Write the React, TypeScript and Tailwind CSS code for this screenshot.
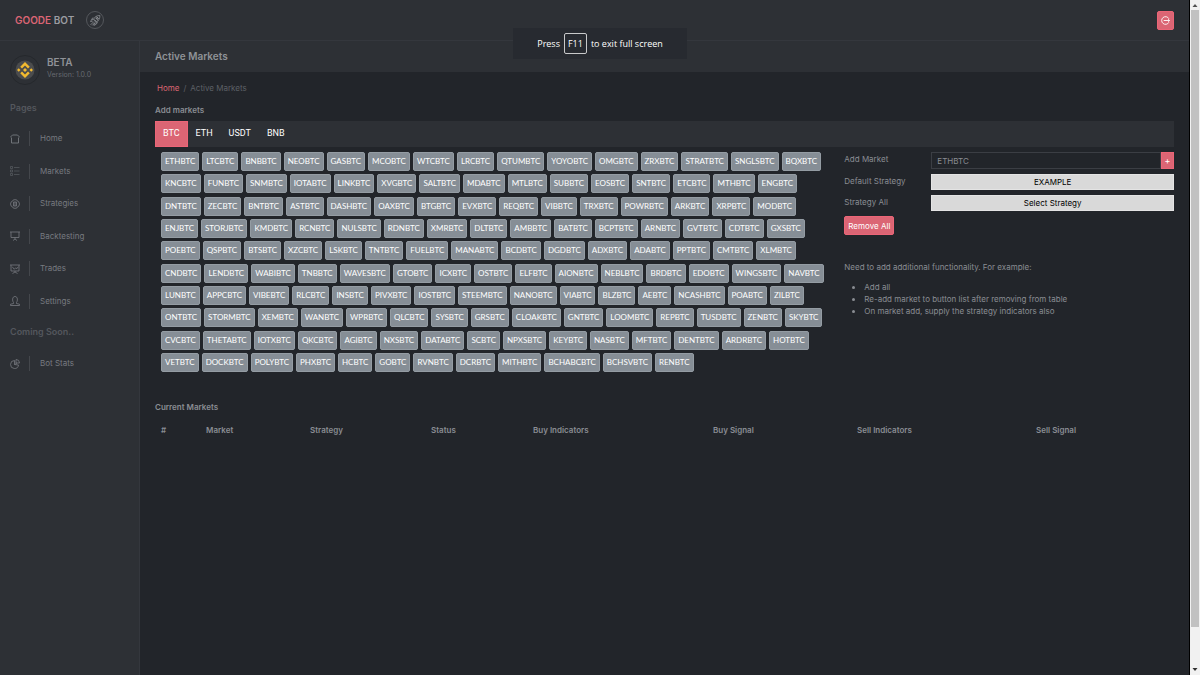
import type { ReactNode } from "react";

const TABS = ["BTC", "ETH", "USDT", "BNB"];

// base symbols, in the order the exchange lists them; all quoted in BTC
const MARKET_ROWS = [
  "ETH LTC BNB NEO GAS MCO WTC LRC QTUM YOYO OMG ZRX STRAT SNGLS BQX",
  "KNC FUN SNM IOTA LINK XVG SALT MDA MTL SUB EOS SNT ETC MTH ENG",
  "DNT ZEC BNT AST DASH OAX BTG EVX REQ VIB TRX POWR ARK XRP MOD",
  "ENJ STORJ KMD RCN NULS RDN XMR DLT AMB BAT BCPT ARN GVT CDT GXS",
  "POE QSP BTS XZC LSK TNT FUEL MANA BCD DGD ADX ADA PPT CMT XLM",
  "CND LEND WABI TNB WAVES GTO ICX OST ELF AION NEBL BRD EDO WINGS NAV",
  "LUN APPC VIBE RLC INS PIVX IOST STEEM NANO VIA BLZ AE NCASH POA ZIL",
  "ONT STORM XEM WAN WPR QLC SYS GRS CLOAK GNT LOOM REP TUSD ZEN SKY",
  "CVC THETA IOTX QKC AGI NXS DATA SC NPXS KEY NAS MFT DENT ARDR HOT",
  "VET DOCK POLY PHX HC GO RVN DCR MITH BCHABC BCHSV REN",
].map((row) => row.split(" ").map((s) => `${s}BTC`));

function Icon({ children }: { children: ReactNode }) {
  return (
    <svg
      viewBox="0 0 20 20"
      className="size-[10px] shrink-0"
      fill="none"
      stroke="currentColor"
      strokeWidth="1.6"
      aria-hidden="true"
    >
      {children}
    </svg>
  );
}

const NAV = [
  {
    label: "Home",
    icon: <path d="M3 7v11h14V7M0 7l5-5h10l5 5" strokeWidth="1.8" />,
  },
  {
    label: "Markets",
    icon: (
      <path
        d="M1 1h4v4H1zM1 8h4v4H1zM1 15h4v4H1zM8 3h11M8 10h11M8 17h11"
        strokeWidth="1.2"
        opacity="0.7"
      />
    ),
  },
  {
    label: "Strategies",
    icon: (
      <>
        <path d="M7 1.500h6l1.500 2.500 3 1.500L19 10l-1.500 4.500-3 1.500L13 18.500H7L5.500 16l-3-1.500L1 10l1.500-4.500 3-1.500z" />
        <path d="M7 6h6v8H7zM10 6v8" />
      </>
    ),
  },
  {
    label: "Backtesting",
    icon: <path d="M0 2h20M2 2v11h16V2M10 13v3M6 19l4-3 4 3" />,
  },
  {
    label: "Trades",
    icon: (
      <path d="M0 2h20M2 2v12h16V2M10 14v2M5 19l5-3 5 3M4.500 5.500l4 5 3-3 2 2 3-4" />
    ),
  },
  {
    label: "Settings",
    icon: (
      <path d="M7 13C4.500 10 4 1 10 1s5.500 9 3 12v2l6 1.500V19H1v-2.500L7 15z" />
    ),
  },
];

const COLUMNS = [
  { label: "#", width: "w-[45px]" },
  { label: "Market", width: "w-[104px]" },
  { label: "Strategy", width: "w-[121px]" },
  { label: "Status", width: "w-[102px]" },
  { label: "Buy Indicators", width: "w-[180px]" },
  { label: "Buy Signal", width: "w-[144px]" },
  { label: "Sell Indicators", width: "w-[179px]" },
  { label: "Sell Signal", width: "w-auto" },
];

function NavItem({ label, icon }: { label: string; icon: ReactNode }) {
  return (
    <li>
      <a href="#" className="flex h-[15px] items-center">
        <Icon>{icon}</Icon>
        <span className="ml-[9px] h-[15px] border-l border-[#44474c] pl-[10px] leading-[15px]">
          {label}
        </span>
      </a>
    </li>
  );
}

function TopBar() {
  return (
    <header className="flex h-[41px] shrink-0 items-center border-b border-[#34373d] bg-[#2d3035] pr-[15px] pl-[15px]">
      <a href="#" className="w-[60px] text-[10px] font-semibold whitespace-nowrap text-[#9a9ca1]">
        <span className="text-[#db6574]">GOODE</span> BOT
      </a>
      <button
        type="button"
        aria-label="Toggle sidebar"
        className="ml-[11px] grid size-[18px] place-items-center rounded-full border border-[#54575c] text-[#a0a3a8]"
      >
        <svg viewBox="0 0 20 20" className="size-[11px]" fill="none" stroke="currentColor" strokeWidth="1.2">
          <path d="M18 1c-6 0-9 2-12 7l5 5c5-3 7-6 7-12zM6 8 3 8 1 12l4-1M11 13l0 4-4 2 1-5M7 12l-6 6M9 14l-5 5M10 5l5 5M8 8l4 4M12 3l4 4M6 5l-3 2M14 12l-2 4" />
          <circle cx="13" cy="6" r="1.500" />
        </svg>
      </button>
      <button
        type="button"
        aria-label="Log out"
        className="ml-auto grid h-[19px] w-[17px] place-items-center rounded-xs border border-[#ec6577] bg-[#db6574] text-white"
      >
        <svg viewBox="0 0 20 20" className="size-[9px]" fill="none" stroke="currentColor" strokeWidth="2">
          <path d="M17.500 6a8.500 8.500 0 1 0 0 8M6 10h13M16 7l3 3-3 3" />
        </svg>
      </button>
    </header>
  );
}

function Sidebar() {
  return (
    <nav className="w-[140px] shrink-0 border-r border-[#34373d] bg-[#2d3035] px-[10px] text-[#777a80]">
      <div className="mt-[14px] flex h-[30px] items-start">
        <span className="grid size-[30px] shrink-0 place-items-center rounded-full border border-[#25282c]">
          <svg viewBox="0 0 40 40" className="size-[20px]">
            <circle cx="20" cy="20" r="19" fill="#4b4c4d" />
            <g fill="#f3ba2f">
              <path d="m20 4 9.500 9.500-3.500 3.500-6-6-6 6-3.500-3.500z" />
              <path d="m20 36 9.500-9.500-3.500-3.500-6 6-6-6-3.500 3.500z" />
              <path d="m4 20 3.500-3.500L11 20l-3.500 3.500zM29 20l3.500-3.500L36 20l-3.500 3.500zM16 20l4-4 4 4-4 4z" />
            </g>
          </svg>
        </span>
        <div className="ml-[7px]">
          <h1 className="text-[10px] leading-[14px] font-semibold text-[#8f9297]">BETA</h1>
          <p className="text-[7px] leading-[12px] text-[#666a70]">Version: 1.0.0</p>
        </div>
      </div>

      <h2 className="mt-[16px] text-[9px] leading-[14px] font-semibold text-[#54575d]">Pages</h2>
      <ul className="mt-[16px] flex h-[178px] flex-col justify-between">
        {NAV.map((n) => (
          <NavItem key={n.label} label={n.label} icon={n.icon} />
        ))}
      </ul>

      <h2 className="mt-[16px] text-[9px] leading-[14px] font-semibold text-[#54575d]">Coming Soon..</h2>
      <ul className="mt-[17px]">
        <NavItem
          label="Bot Stats"
          icon={<path d="M9 3a8 8 0 1 0 8 9l-8-1zM12 1v7h7a7 7 0 0 0-7-7zM9 11l5-3" />}
        />
      </ul>
    </nav>
  );
}

function MarketForm() {
  const select =
    "h-[16px] w-full appearance-none border border-[#e4e4e4] bg-[#d9d9d9] text-center text-[8px] leading-[14px] text-black [text-align-last:center]";
  return (
    <div className="pt-[5px] pl-[10px]">
      <form className="grid grid-cols-[87px_1fr] gap-y-[5px]">
        <label htmlFor="market" className="leading-[14px]">Add Market</label>
        <div className="flex h-[17px]">
          <input
            id="market"
            defaultValue="ETHBTC"
            className="min-w-0 flex-1 border border-[#3b3e44] bg-[#22252a] px-[5px] text-[8px] text-[#8a8d93]"
          />
          <button type="button" aria-label="Add" className="w-[13px] border border-[#ec6577] bg-[#db6574] text-[9px] leading-[15px] text-white">
            +
          </button>
        </div>
        <label htmlFor="strategy" className="leading-[14px]">Default Strategy</label>
        <select id="strategy" className={select}>
          <option>EXAMPLE</option>
        </select>
        <label htmlFor="strategy-all" className="leading-[14px]">Strategy All</label>
        <select id="strategy-all" className={select}>
          <option>Select Strategy</option>
        </select>
      </form>
      <button
        type="button"
        className="mt-[5px] block h-[19px] w-[50px] rounded-xs border border-[#ec6577] bg-[#db6574] text-[8px] whitespace-nowrap text-white"
      >
        Remove All
      </button>

      <p className="mt-[26px] leading-[12px]">Need to add additional functionality. For example:</p>
      <ul className="mt-[8px] list-disc pl-[20px] leading-[12px]">
        <li>Add all</li>
        <li>Re-add market to button list after removing from table</li>
        <li>On market add, supply the strategy indicators also</li>
      </ul>
    </div>
  );
}

function Scrollbar() {
  return (
    <div className="flex w-[11px] shrink-0 flex-col items-center border-l border-black bg-[#f1f1f1]" aria-hidden="true">
      <svg viewBox="0 0 10 10" className="size-[10px] text-[#505050]">
        <path d="M2.500 7 5 4l2.500 3z" fill="currentColor" />
      </svg>
      <div className="w-[8px] flex-1 bg-[#c1c1c1]" />
      <svg viewBox="0 0 10 10" className="mt-[38px] size-[10px] text-[#303030]">
        <path d="M2.500 3h5L5 6z" fill="currentColor" />
      </svg>
    </div>
  );
}

export default function App() {
  return (
    <div className="flex h-screen overflow-hidden bg-[#22252a] font-['Inter',sans-serif] text-[8px] text-[#8a8d93]">
      <div className="flex min-w-0 flex-1 flex-col">
        <TopBar />
        <div className="flex flex-1">
          <Sidebar />
          <main className="min-w-0 flex-1">
            <div className="flex h-[31px] items-center bg-[#2d3035] pl-[15px]">
              <h2 className="text-[10px] font-semibold text-[#8f9297]">Active Markets</h2>
            </div>
            <div className="px-[15px]">
              <nav aria-label="Breadcrumb" className="mt-[10px] flex gap-[4px] pl-[2px] leading-[12px] text-[#5d6066]">
                <a href="#" className="text-[#db6574]">Home</a>
                <span>/</span>
                <span>Active Markets</span>
              </nav>

              <h3 className="mt-[10px] leading-[12px] font-semibold">Add markets</h3>
              <div className="mt-[5px] flex h-[26px] bg-[#2d3035] font-['Roboto',sans-serif] text-[9px]">
                {TABS.map((t, i) => (
                  <button
                    key={t}
                    type="button"
                    className={
                      i === 0
                        ? "border border-[#ec6577] bg-[#db6574] px-[7px] text-white"
                        : "border border-transparent px-[7px] text-white"
                    }
                  >
                    {t}
                  </button>
                ))}
              </div>

              <div className="grid grid-cols-3">
                <div className="col-span-2 flex h-[225px] flex-col justify-between pt-[5px] pl-[6px]">
                  {MARKET_ROWS.map((row) => (
                    <div key={row[0]} className="flex gap-[3px]">
                      {row.map((m) => (
                        <button
                          key={m}
                          type="button"
                          className="h-[19px] rounded-xs border border-[#949ca3] bg-[#868e96] px-[3px] font-['Lato',sans-serif] text-[8px] leading-[17px] whitespace-nowrap text-white"
                        >
                          {m}
                        </button>
                      ))}
                    </div>
                  ))}
                </div>
                <MarketForm />
              </div>

              <h3 className="mt-[29px] leading-[12px] font-semibold">Current Markets</h3>
              <table className="mt-[10px] w-full table-fixed text-left">
                <thead>
                  <tr>
                    {COLUMNS.map((c) => (
                      <th key={c.label} scope="col" className={`${c.width} pl-[6px] leading-[14px] font-semibold`}>
                        {c.label}
                      </th>
                    ))}
                  </tr>
                </thead>
              </table>
            </div>
          </main>
        </div>
      </div>
      <Scrollbar />

      {/* browser hint, floats above the page */}
      <div className="absolute top-[28px] left-1/2 flex h-[31px] w-[174px] -translate-x-1/2 items-center justify-center gap-[4px] bg-[#272a30] font-['Open_Sans',sans-serif] text-[9px] text-white">
        <span>Press</span>
        <kbd className="rounded-xs border border-[#c8c9ca] px-[3px] font-['Open_Sans',sans-serif] leading-[19px]">F11</kbd>
        <span>to exit full screen</span>
      </div>
    </div>
  );
}
